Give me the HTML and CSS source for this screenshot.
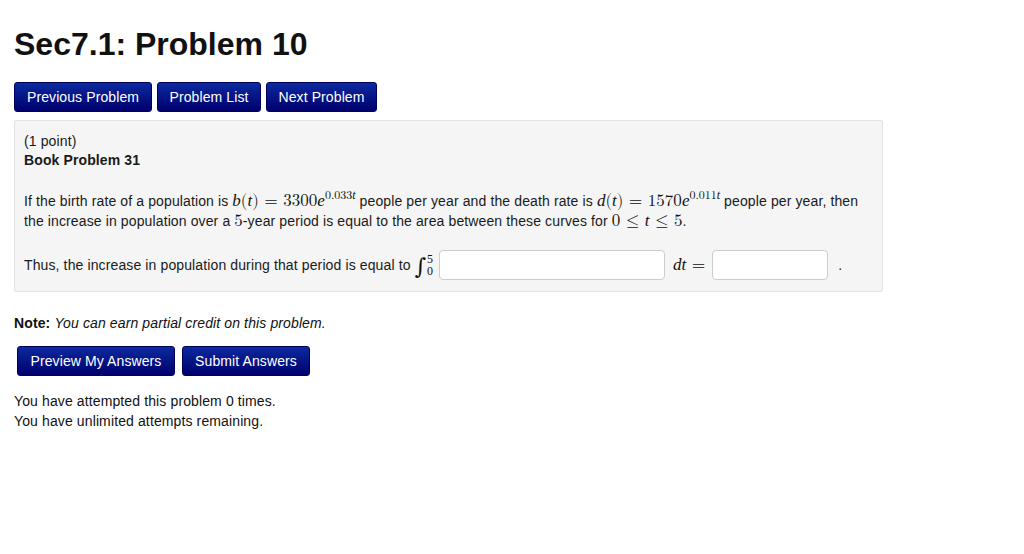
FILE: index.html
```html
<!DOCTYPE html>
<html>
<head>
<meta charset="utf-8">
<link rel="stylesheet" href="styles.css">
</head>
<body>
<div class="page">
  <h1 class="title">Sec7.1: Problem 10</h1>
  <div class="nav">
    <button class="btn nav-btn">Previous Problem</button>
    <button class="btn nav-btn">Problem List</button>
    <button class="btn nav-btn">Next Problem</button>
  </div>
  <div class="problem">
    <div class="points">(1 point)</div>
    <div class="book">Book Problem 31</div>
    <p class="text">If the birth rate of a population is <span class="m"><i>b</i>(<i>t</i>) = 3300<i>e</i><sup>0.033<i>t</i></sup></span> people per year and the death rate is <span class="m"><i>d</i>(<i>t</i>) = 1570<i>e</i><sup>0.011<i>t</i></sup></span> people per year, then the increase in population over a <span class="m">5</span>-year period is equal to the area between these curves for <span class="m">0 ≤ <i>t</i> ≤ 5</span>.</p>
    <div class="answer">
      <span>Thus, the increase in population during that period is equal to</span>
      <span class="m integral"><span class="int">∫</span><span class="limits"><span class="up">5</span><span class="lo">0</span></span></span>
      <input class="inp wide" type="text">
      <span class="m dt"><i>dt</i> =</span>
      <input class="inp narrow" type="text">
      <span class="dot">.</span>
    </div>
  </div>
  <p class="note"><b>Note:</b> <i>You can earn partial credit on this problem.</i></p>
  <div class="actions">
    <button class="btn act-btn">Preview My Answers</button>
    <button class="btn act-btn">Submit Answers</button>
  </div>
  <div class="attempts">
    <div>You have attempted this problem 0 times.</div>
    <div>You have unlimited attempts remaining.</div>
  </div>
</div>
</body>
</html>
```
FILE: styles.css
```css
html, body {
  margin: 0;
  padding: 0;
  background: #fff;
}
body {
  font-family: "Liberation Sans", Arial, sans-serif;
  font-size: 14px;
  color: #1a1a1a;
  letter-spacing: 0.12px;
}
.page {
  padding: 0 14px;
  width: 869px;
}
.title {
  margin: 0 0 20px 0;
  padding-top: 26px;
  font-size: 32px;
  line-height: 36px;
  font-weight: bold;
  color: #111;
  letter-spacing: 0;
}
.nav {
  display: flex;
  gap: 5px;
  height: 30px;
}
.btn {
  font-family: "Liberation Sans", Arial, sans-serif;
  font-size: 14px;
  letter-spacing: 0.1px;
  color: #fff;
  background: linear-gradient(#0b2a9e, #00006d);
  border: 1px solid #00005a;
  border-radius: 3px;
  height: 30px;
  padding: 0 8px;
  cursor: pointer;
}
.nav-btn:nth-child(1) { width: 138px; }
.nav-btn:nth-child(2) { width: 104px; }
.nav-btn:nth-child(3) { width: 111px; }
.problem {
  margin-top: 8px;
  background: #f5f5f5;
  border: 1px solid #e3e3e3;
  border-radius: 2px;
  padding: 11px 9px 9px 9px;
  height: 172px;
  box-sizing: border-box;
}
.points {
  line-height: 19px;
}
.book {
  font-weight: bold;
  line-height: 19px;
}
.text {
  margin: 21px 0 0 0;
  line-height: 20px;
  width: 849px;
}
.m {
  font-family: "Latin Modern Math", "DejaVu Serif", "Liberation Serif", serif;
  font-size: 17px;
  color: #111;
  letter-spacing: 0;
}
.m i {
  font-family: "Liberation Serif", serif;
}
.m sup {
  font-size: 12px;
  vertical-align: 7px;
  line-height: 0;
}
.answer {
  margin-top: 19px;
  display: flex;
  align-items: center;
  height: 30px;
}
.integral {
  display: inline-flex;
  align-items: center;
  margin-left: 4px;
  margin-right: 6px;
}
.int {
  font-family: "DejaVu Serif", serif;
  font-style: italic;
  font-size: 22px;
  line-height: 22px;
  margin-top: 3px;
}
.limits {
  display: inline-flex;
  flex-direction: column;
  font-family: "Liberation Serif", serif;
  font-size: 12px;
  line-height: 10px;
  margin-left: 1px;
}
.lo { margin-top: 2px; }
.inp {
  height: 30px;
  box-sizing: border-box;
  border: 1px solid #ccc;
  border-radius: 4px;
  background: #fff;
  padding: 4px 6px;
}
.wide { width: 226px; }
.narrow { width: 116px; }
.dt {
  margin: 0 7px 0 8px;
}
.dot {
  margin-left: 10px;
}
.note {
  margin: 23px 0 0 0;
  line-height: 16px;
  color: #111;
}
.actions {
  display: flex;
  gap: 7px;
  margin-top: 15px;
  padding-left: 3px;
}
.act-btn:nth-child(1) { width: 158px; }
.act-btn:nth-child(2) { width: 128px; }
.attempts {
  margin-top: 15px;
  line-height: 20px;
  color: #111;
}
```
